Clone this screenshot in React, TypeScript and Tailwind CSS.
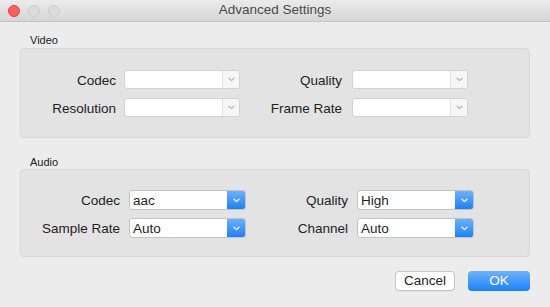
import React from "react";

const font = { fontFamily: '"Liberation Sans", Arial, sans-serif' };

function Chevron({ color }: { color: string }) {
  return (
    <svg width="7" height="5" viewBox="0 0 7 5" fill="none">
      <path d="M1 1.2 L3.5 3.6 L6 1.2" stroke={color} strokeWidth="1.2" strokeLinecap="round" strokeLinejoin="round" />
    </svg>
  );
}

function EmptyCombo() {
  return (
    <div className="flex h-[19px] w-[116px] rounded-[3px] border border-[#d2d2d2] bg-white overflow-hidden">
      <div className="flex-1" />
      <div className="flex w-[17px] items-center justify-center border-l border-[#e2e2e2] bg-[#f6f6f6]">
        <Chevron color="#b5b5b5" />
      </div>
    </div>
  );
}

function Combo({ value }: { value: string }) {
  return (
    <div className="flex h-[20px] w-[117px] rounded-[3px] border border-[#c3c3c3] bg-white overflow-hidden">
      <div className="flex-1 pl-[3px] pt-[1px] text-[13.5px] leading-[18px] text-[#1e1e1e]">{value}</div>
      <div className="flex w-[18px] items-center justify-center bg-gradient-to-b from-[#69b1fa] to-[#1a7ff7]">
        <Chevron color="#ffffff" />
      </div>
    </div>
  );
}

export default function App() {
  return (
    <div style={font} className="flex h-[307px] w-[550px] flex-col bg-[#ececec] text-[#222]">
      {/* Title bar */}
      <div className="relative flex h-[22px] items-center justify-center border-b border-[#c4c4c4] bg-gradient-to-b from-[#ebebeb] to-[#d6d6d6]">
        <div className="absolute left-[8px] top-[5px] flex gap-[8px]">
          <span className="h-[12px] w-[12px] rounded-full border border-[#e0443e] bg-[#fc605c]" />
          <span className="h-[12px] w-[12px] rounded-full border border-[#cdcdcd] bg-[#dcdcdc]" />
          <span className="h-[12px] w-[12px] rounded-full border border-[#cdcdcd] bg-[#dcdcdc]" />
        </div>
        <span className="text-[13.5px] text-[#4a4a4a]">Advanced Settings</span>
      </div>

      <div className="flex flex-col px-[20px]">
        {/* Video */}
        <div className="mt-[12px] pl-[10px] text-[11px] leading-[13px]">Video</div>
        <div className="mt-[1px] h-[90px] rounded-[4px] border border-[#d8d8d8] bg-[#e3e3e3] pt-[21px]">
          <div className="flex flex-col gap-[9px] text-[13.5px]">
            <div className="flex h-[19px] items-center">
              <span className="w-[95px] pt-[4px] text-right">Codec</span>
              <span className="ml-[8px]"><EmptyCombo /></span>
              <span className="w-[102px] pt-[4px] text-right">Quality</span>
              <span className="ml-[10px]"><EmptyCombo /></span>
            </div>
            <div className="flex h-[19px] items-center">
              <span className="w-[95px] pt-[4px] text-right">Resolution</span>
              <span className="ml-[8px]"><EmptyCombo /></span>
              <span className="w-[102px] pt-[4px] text-right">Frame Rate</span>
              <span className="ml-[10px]"><EmptyCombo /></span>
            </div>
          </div>
        </div>

        {/* Audio */}
        <div className="mt-[18px] pl-[10px] text-[11px] leading-[13px]">Audio</div>
        <div className="h-[88px] rounded-[4px] border border-[#d8d8d8] bg-[#e3e3e3] pt-[20px]">
          <div className="flex flex-col gap-[8px] text-[13.5px]">
            <div className="flex h-[20px] items-center">
              <span className="w-[99px] pt-[3px] text-right">Codec</span>
              <span className="ml-[9px]"><Combo value="aac" /></span>
              <span className="w-[102px] pt-[3px] text-right">Quality</span>
              <span className="ml-[9px]"><Combo value="High" /></span>
            </div>
            <div className="flex h-[20px] items-center">
              <span className="w-[99px] pt-[3px] text-right">Sample Rate</span>
              <span className="ml-[9px]"><Combo value="Auto" /></span>
              <span className="w-[102px] pt-[3px] text-right">Channel</span>
              <span className="ml-[9px]"><Combo value="Auto" /></span>
            </div>
          </div>
        </div>

        {/* Buttons */}
        <div className="mt-[14px] flex justify-end gap-[13px]">
          <button className="h-[20px] w-[60px] rounded-[4px] border border-[#c6c6c6] bg-white text-[13.5px] leading-[18px] text-[#222] shadow-[0_1px_0_rgba(0,0,0,0.05)]">
            Cancel
          </button>
          <button className="h-[20px] w-[62px] rounded-[4px] bg-gradient-to-b from-[#6cb3fa] to-[#1180f8] text-[13.5px] leading-[20px] text-white">
            OK
          </button>
        </div>
      </div>
    </div>
  );
}
